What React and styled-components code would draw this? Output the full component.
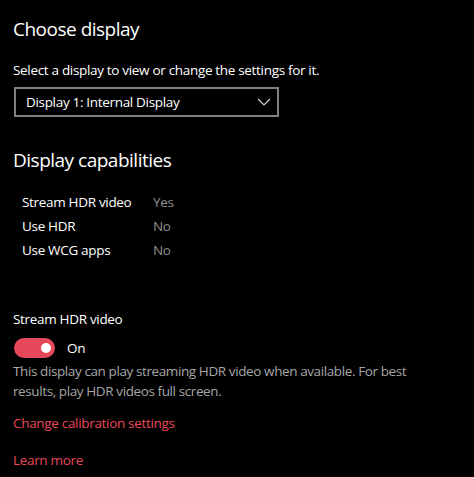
import React from 'react';
import styled, { createGlobalStyle } from 'styled-components';

const GlobalStyle = createGlobalStyle`
  html, body {
    margin: 0;
    padding: 0;
    background: #000000;
  }
  body {
    font-family: "Open Sans", "Noto Sans", sans-serif;
    color: #ffffff;
  }
`;

const Page = styled.main`
  display: flex;
  flex-direction: column;
  align-items: flex-start;
  width: 474px;
  height: 477px;
  padding: 15px 0 0 13px;
  box-sizing: border-box;
  background: #000000;
  overflow: hidden;
  font-size: 13.5px;
  letter-spacing: -0.32px;
`;

const SectionTitle = styled.h2`
  margin: ${(p) => p.$top || 0}px 0 0 0;
  font-size: 19px;
  font-weight: 400;
  line-height: 28px;
  letter-spacing: -0.5px;
  color: #ffffff;
`;

const Text = styled.p`
  margin: ${(p) => p.$top || 0}px 0 0 0;
  line-height: 20px;
  color: ${(p) => p.$muted ? '#a6a6a6' : '#ffffff'};
  letter-spacing: ${(p) => p.$muted ? '-0.4px' : 'inherit'};
`;

const Dropdown = styled.button`
  display: flex;
  align-items: center;
  justify-content: space-between;
  margin: 7px 0 0 1px;
  width: 265px;
  height: 30px;
  padding: 0 6px 0 10px;
  box-sizing: border-box;
  border: 2px solid #7f7f7f;
  background: #000000;
  color: #ffffff;
  font-family: inherit;
  font-size: inherit;
  letter-spacing: inherit;
`;

const Table = styled.div`
  display: grid;
  grid-template-columns: 131px auto;
  grid-auto-rows: 24px;
  margin: 16px 0 0 9px;
  line-height: 24px;
`;

const Cell = styled.span`
  color: ${(p) => p.$value ? '#8f8f8f' : '#ffffff'};
`;

const ToggleRow = styled.div`
  display: flex;
  align-items: center;
  gap: 12px;
  margin: 9px 0 0 1px;
`;

const Track = styled.span`
  position: relative;
  display: block;
  width: 41px;
  height: 20px;
  border-radius: 10px;
  background: #e8485b;
`;

const Knob = styled.span`
  position: absolute;
  top: 5px;
  right: 4px;
  width: 10px;
  height: 10px;
  border-radius: 50%;
  background: #ffffff;
`;

const Link = styled.a`
  display: block;
  margin: ${(p) => p.$top || 0}px 0 0 0;
  line-height: 20px;
  color: #e8485b;
  text-decoration: none;
`;

const Chevron = () => (
  <svg width="14" height="8" viewBox="0 0 14 8" fill="none">
    <path d="M1 1 L7 7 L13 1" stroke="#d0d0d0" strokeWidth="1.1" />
  </svg>
);

const capabilities = [
  ['Stream HDR video', 'Yes'],
  ['Use HDR', 'No'],
  ['Use WCG apps', 'No'],
];

const App = () => {
  return (
    <>
      <GlobalStyle />
      <Page>
        <SectionTitle>Choose display</SectionTitle>
        <Text $top={17}>Select a display to view or change the settings for it.</Text>
        <Dropdown>
          <span>Display 1: Internal Display</span>
          <Chevron />
        </Dropdown>

        <SectionTitle $top={29}>Display capabilities</SectionTitle>
        <Table>
          {capabilities.map(([label, value]) => (
            <React.Fragment key={label}>
              <Cell>{label}</Cell>
              <Cell $value>{value}</Cell>
            </React.Fragment>
          ))}
        </Table>

        <Text $top={47}>Stream HDR video</Text>
        <ToggleRow>
          <Track><Knob /></Track>
          <span>On</span>
        </ToggleRow>
        <Text $top={3} $muted>
          This display can play streaming HDR video when available. For best<br />
          results, play HDR videos full screen.
        </Text>
        <Link $top={12} href="#">Change calibration settings</Link>
        <Link $top={17} href="#">Learn more</Link>
      </Page>
    </>
  );
};

export default App;
